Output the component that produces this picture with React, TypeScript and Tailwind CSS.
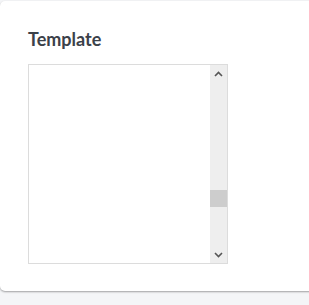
export default function App() {
  return (
    <div className="min-h-[305px] w-[309px] overflow-hidden bg-[#f4f5f7] pt-px">
      <div
        className="h-[290px] w-[330px] rounded-[5px] bg-white pl-[28px] pt-[27px] shadow-[0_1px_2px_rgba(0,0,0,0.35)]"
        style={{ fontFamily: 'Lato, "Open Sans", sans-serif' }}
      >
        <h2 className="text-[18px] font-bold leading-[22px] text-[#3b4149]">Template</h2>
        <div className="mt-[14px] flex h-[200px] w-[200px] border border-[#dcdcdc]">
          <div className="flex-1" />
          <div className="flex w-[17px] flex-col items-center bg-[#eeeeee]">
            <div className="flex h-[17px] items-center justify-center">
              <svg width="9" height="6" viewBox="0 0 9 6">
                <path d="M1 5 L4.5 1.5 L8 5" fill="none" stroke="#555" strokeWidth="1.6" />
              </svg>
            </div>
            <div className="mt-[108px] h-[17px] w-[17px] bg-[#cdcdcd]" />
            <div className="flex-1" />
            <div className="flex h-[17px] items-center justify-center">
              <svg width="9" height="6" viewBox="0 0 9 6">
                <path d="M1 1 L4.5 4.5 L8 1" fill="none" stroke="#555" strokeWidth="1.6" />
              </svg>
            </div>
          </div>
        </div>
      </div>
    </div>
  );
}
